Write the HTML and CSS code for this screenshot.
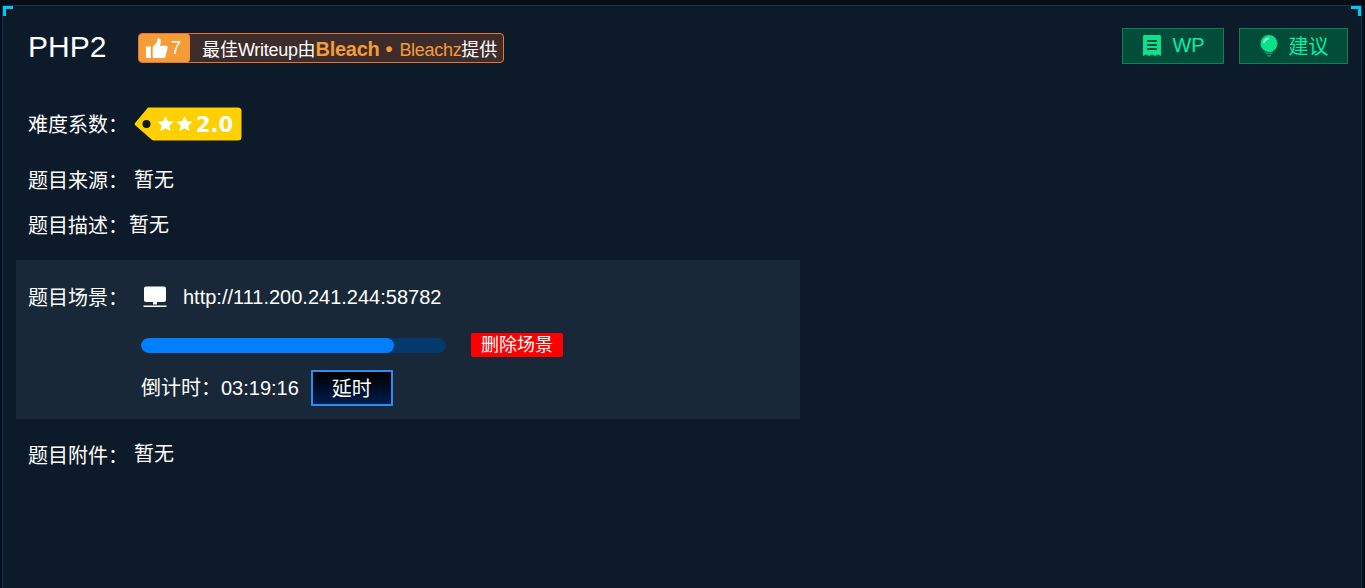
FILE: index.html
```html
<!DOCTYPE html>
<html lang="zh-CN">
<head>
  <meta charset="UTF-8" />
  <meta name="viewport" content="width=device-width, initial-scale=1" />
  <title>PHP2</title>
  <link rel="stylesheet" href="styles.css">
</head>
<body>
  <div class="panel">
    <span class="corner corner-left"></span>
    <span class="corner corner-right"></span>

    <div class="head">
      <div class="title">PHP2</div>
      <div class="best">
        <div class="likes">
          <svg class="thumb" viewBox="0 0 24 24" width="24" height="24">
            <path fill="#fff" d="M1 10h5v12H1zM8 10.500 12 6c.8-1.200 1-3 1.200-4.700 2.600-.4 3.800 2 3.200 4.700l-.8 3H22c1.300 0 2 1.200 1.700 2.300l-2.400 9c-.3 1-1 1.700-2 1.700H10c-1 0-2-.9-2-2z"/>
          </svg>
          <span>7</span>
        </div>
        <div class="best-text">最佳<span class="wu">Writeup</span>由<b>Bleach</b><i class="dot">•</i><span class="team">Bleachz</span>提供</div>
      </div>
      <div class="head-btns">
        <a class="green-btn btn-wp">
          <svg viewBox="0 0 20 22" width="20" height="22">
            <path fill="#0be08c" d="M1 1.500A1.500 1.500 0 0 1 2.500 0h15A1.500 1.500 0 0 1 19 1.500V21l-3-1.500-3 1.500-3-1.500L7 21l-3-1.500L1 21z"/>
            <path stroke="#03503c" stroke-width="2" d="M5 6h10M5 10h10M5 14h10"/>
          </svg>
          <span>WP</span>
        </a>
        <a class="green-btn btn-tip">
          <svg viewBox="0 0 20 22" width="20" height="22">
            <circle cx="10" cy="8.500" r="8.500" fill="#0be08c"/>
            <path fill="#0be08c" d="M6 13h8v3.500H6z"/>
            <path fill="#8dfdd0" d="M4 8A6 6 0 0 1 10 2.500v2A4 4 0 0 0 6 8z"/>
            <path fill="#0a9c68" d="M6.500 17.500h7V19h-7zM8 20h4v1.500H8z"/>
          </svg>
          <span>建议</span>
        </a>
      </div>
    </div>

    <div class="row row-level">
      <span class="label">难度系数：</span>
      <svg class="tag" viewBox="0 0 108 34" width="108" height="34">
        <path fill="#ffd000" d="M14 0.500H104a3.500 3.500 0 0 1 3.500 3.500V30a3.500 3.500 0 0 1-3.500 3.500H20a4 4 0 0 1-2.500-1L1.500 18.500a2 2 0 0 1 0-3L14 0.500z"/>
        <circle cx="12.500" cy="17" r="4" fill="#0c1826"/>
        <polygon fill="#fff" points="31.500,9 33.900,14.300 39.700,14.800 35.300,18.600 36.700,24.200 31.500,21.200 26.300,24.200 27.700,18.600 23.300,14.800 29.100,14.300"/>
        <polygon fill="#fff" points="50.500,9 52.900,14.300 58.700,14.800 54.300,18.600 55.700,24.200 50.500,21.200 45.300,24.200 46.700,18.600 42.300,14.800 48.100,14.300"/>
        <text class="tag-num" x="62" y="25">2.0</text>
      </svg>
    </div>

    <div class="row row-source">
      <span class="label">题目来源：</span>
      <span class="value">暂无</span>
    </div>

    <div class="row row-desc">
      <span class="label">题目描述：</span>
      <span class="value">暂无</span>
    </div>

    <div class="scene">
      <div class="row scene-top">
        <span class="label">题目场景：</span>
        <svg class="monitor" viewBox="0 0 24 22" width="24" height="22">
          <rect x="1" y="0.500" width="22" height="15.500" rx="2" fill="#fff"/>
          <path fill="#fff" d="M10 16h4v2.500h-4zM0.500 19.500h23V21H0.500z"/>
        </svg>
        <span class="url">http://111.200.241.244:58782</span>
      </div>
      <div class="scene-bar">
        <div class="progress"><div class="progress-fill" style="width:83%"></div></div>
        <a class="del-btn">删除场景</a>
      </div>
      <div class="scene-time">
        <span class="time-text">倒计时：03:19:16</span>
        <a class="delay-btn">延时</a>
      </div>
    </div>

    <div class="row row-files">
      <span class="label">题目附件：</span>
      <span class="value">暂无</span>
    </div>
  </div>
</body>
</html>
```

FILE: styles.css
```css
* { box-sizing: border-box; }
html, body {
  height: 100%;
  overflow: hidden;
}
body {
  margin: 0;
  padding: 5px 3px 0 2px;
  background: #070d17;
  color: #fff;
  font-family: 'Liberation Sans', 'Noto Sans CJK SC', sans-serif;
}
.panel {
  position: relative;
  height: 100%;
  padding: 0 14px;
  background: #0d1a29;
  border: 1px solid #0c3358;
  border-bottom: none;
}
.corner {
  position: absolute;
  top: 0;
  width: 10px;
  height: 10px;
  border-top: 3px solid #00c8f0;
}
.corner-left {
  left: 0;
  border-left: 3px solid #00c8f0;
}
.corner-right {
  right: 0;
  border-right: 3px solid #00c8f0;
}

.head {
  display: flex;
  align-items: center;
  height: 36px;
  margin-top: 22px;
  padding-left: 11px;
}
.title {
  width: 110px;
  margin-top: 2px;
  font-size: 30px;
  line-height: 36px;
}
.best {
  display: flex;
  align-items: center;
  width: 366px;
  height: 30px;
  margin-top: 4px;
  background: #3e2c2b;
  border: 1px solid #e8762e;
  border-radius: 4px;
}
.likes {
  display: flex;
  align-items: center;
  gap: 3px;
  width: 51px;
  height: 28px;
  padding-left: 6px;
  background: #f39c38;
  border-radius: 3px;
  font-size: 18px;
}
.thumb { width: 23px; height: 23px; }
.best-text {
  margin-left: 12px;
  font-size: 18px;
  white-space: nowrap;
}
.wu { letter-spacing: -0.3px; }
.best-text b {
  color: #f39c38;
  font-size: 20px;
  letter-spacing: -0.3px;
}
.dot {
  margin: 0 7px 0 6px;
  color: #f39c38;
  font-size: 20px;
  font-weight: bold;
  font-style: normal;
}
.team { color: #f39c38; letter-spacing: -0.3px; }

.head-btns {
  display: flex;
  gap: 15px;
  margin-left: auto;
  margin-right: -1px;
}
.green-btn {
  display: flex;
  align-items: center;
  justify-content: center;
  gap: 10px;
  height: 36px;
  /* little bright corners on the border */
  background:
    linear-gradient(#14e8a0, #14e8a0) 0 0 / 3px 1px no-repeat,
    linear-gradient(#14e8a0, #14e8a0) 0 0 / 1px 3px no-repeat,
    linear-gradient(#14e8a0, #14e8a0) 100% 0 / 3px 1px no-repeat,
    linear-gradient(#14e8a0, #14e8a0) 100% 0 / 1px 3px no-repeat,
    linear-gradient(#14e8a0, #14e8a0) 0 100% / 3px 1px no-repeat,
    linear-gradient(#14e8a0, #14e8a0) 0 100% / 1px 3px no-repeat,
    linear-gradient(#14e8a0, #14e8a0) 100% 100% / 3px 1px no-repeat,
    linear-gradient(#14e8a0, #14e8a0) 100% 100% / 1px 3px no-repeat,
    #024c3a;
  box-shadow: inset 0 0 0 1px #0a7f5a;
  color: #04f0a6;
  font-size: 20px;
}
.green-btn span { margin-top: -2px; }
.btn-wp { width: 102px; padding-left: 1px; }
.btn-tip { width: 109px; }

.row {
  display: flex;
  align-items: center;
  padding-left: 11px;
}
.label {
  width: 106px;
  font-size: 20px;
  line-height: 26px;
}
.value {
  font-size: 20px;
  line-height: 26px;
  margin-top: -2px;
}
.row-level { margin-top: 43px; }
.row-level .label { margin-top: 2px; }
.tag-num {
  fill: #fff;
  font-family: 'DejaVu Sans', sans-serif;
  font-size: 21px;
  font-weight: bold;
}
.row-source { margin-top: 27px; }
.row-desc { margin-top: 19px; }
.row-desc .label { width: 101px; }

.scene {
  width: 784px;
  height: 159px;
  margin-top: 21px;
  margin-left: -1px;
  background: #182838;
}
.scene-top {
  padding-left: 12px;
  padding-top: 23px;
}
.scene-top .label { margin-top: 2px; }
.monitor { margin-left: 9px; }
.url {
  margin-left: 16px;
  font-size: 20px;
  line-height: 26px;
}
.scene-bar {
  display: flex;
  align-items: center;
  margin-top: 22px;
  padding-left: 125px;
}
.progress {
  width: 305px;
  height: 15px;
  background: #033a6b;
  border-radius: 8px;
  overflow: hidden;
}
.progress-fill {
  height: 100%;
  background: #007fff;
  border-radius: 8px;
}
.del-btn {
  width: 92px;
  height: 24px;
  margin-left: 25px;
  background: #ff0000;
  border-radius: 2px;
  font-size: 18px;
  line-height: 24px;
  text-align: center;
}
.scene-time {
  display: flex;
  align-items: center;
  gap: 12px;
  margin-top: 13px;
  padding-left: 125px;
  font-size: 20px;
}
.time-text { margin-top: -3px; }
.delay-btn {
  width: 82px;
  height: 36px;
  background: linear-gradient(#000, #001c4d);
  border: 2px solid #2d8cf0;
  font-size: 20px;
  line-height: 34px;
  text-align: center;
}
.row-files { margin-top: 22px; }
.row-files .label { margin-top: 2px; }
```
